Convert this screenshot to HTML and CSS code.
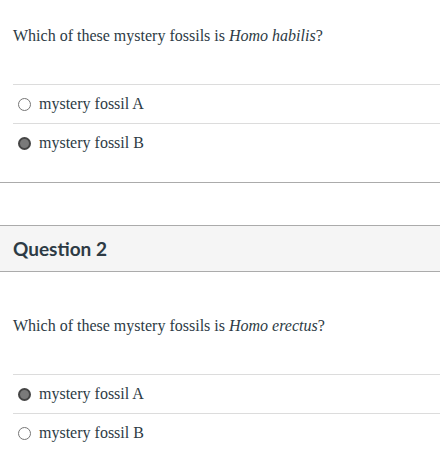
FILE: index.html
```html
<!DOCTYPE html>
<html lang="en">
<head>
<meta charset="utf-8">
<link rel="stylesheet" href="styles.css">
</head>
<body>
<div class="question first">
  <div class="q-body">
    <p class="q-text">Which of these mystery fossils is <em>Homo habilis</em>?</p>
    <div class="answers">
      <div class="answer"><span class="radio"></span><span class="label">mystery fossil A</span></div>
      <div class="answer"><span class="radio checked"></span><span class="label">mystery fossil B</span></div>
    </div>
  </div>
</div>
<div class="question">
  <div class="q-header"><h2>Question 2</h2></div>
  <div class="q-body">
    <p class="q-text">Which of these mystery fossils is <em>Homo erectus</em>?</p>
    <div class="answers">
      <div class="answer"><span class="radio checked"></span><span class="label">mystery fossil A</span></div>
      <div class="answer"><span class="radio"></span><span class="label">mystery fossil B</span></div>
    </div>
  </div>
</div>
</body>
</html>
```
FILE: styles.css
```css
html, body {
  margin: 0;
  padding: 0;
  background: #fff;
  color: #2d3b45;
}
body {
  font-family: "Liberation Serif", "Times New Roman", serif;
  font-size: 16px;
  overflow: hidden;
}
.question {
  border-bottom: 1px solid #ababab;
  margin-bottom: 42px;
}
.q-header {
  background: #f5f5f5;
  border-top: 1px solid #ababab;
  border-bottom: 1px solid #ababab;
  height: 45px;
  display: flex;
  align-items: center;
  padding: 0 13px;
}
.q-header h2 {
  margin: 0;
  font-family: Lato, "Open Sans", sans-serif;
  font-weight: 700;
  font-size: 19px;
  color: #2d3b45;
}
.q-body {
  padding: 42px 0 20px 13px;
}
.first .q-body {
  padding-top: 24px;
}
.q-text {
  margin: 0 0 36px;
  line-height: 24px;
}
.q-text em {
  font-style: italic;
}
.answer {
  display: flex;
  align-items: center;
  gap: 8px;
  height: 38px;
  border-top: 1px solid #dcdcdc;
  padding-left: 5px;
}
.radio {
  box-sizing: border-box;
  width: 13px;
  height: 13px;
  border-radius: 50%;
  border: 1px solid #767676;
  background: #fff;
  flex: none;
}
.radio.checked {
  border: 2px solid #454545;
  background: #7a7a7a;
}
.label {
  line-height: 20px;
}
```
